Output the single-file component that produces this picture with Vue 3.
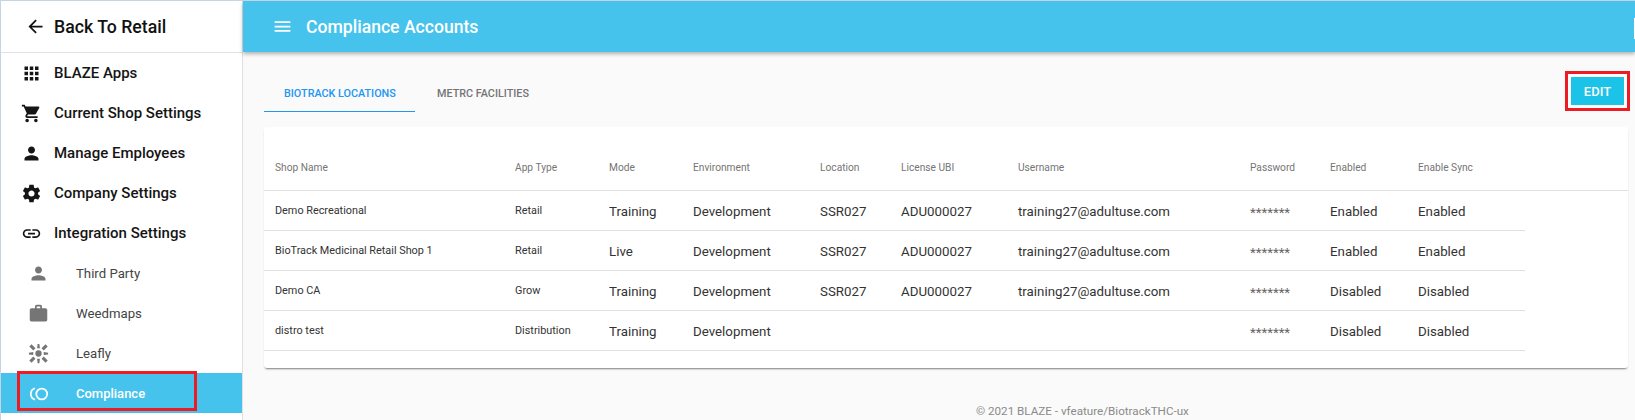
<script setup>
const d = {
  back: 'M20 11H7.83l5.59-5.59L12 4l-8 8 8 8 1.41-1.41L7.83 13H20v-2z',
  apps: 'M4 8h4V4H4v4zm6 12h4v-4h-4v4zm-6 0h4v-4H4v4zm0-6h4v-4H4v4zm6 0h4v-4h-4v4zm6-10v4h4V4h-4zm-6 4h4V4h-4v4zm6 6h4v-4h-4v4zm0 6h4v-4h-4v4z',
  cart: 'M7 18c-1.1 0-1.99.9-1.99 2S5.9 22 7 22s2-.9 2-2-.9-2-2-2zM1 2v2h2l3.6 7.59-1.35 2.45c-.16.28-.25.61-.25.96 0 1.1.9 2 2 2h12v-2H7.42c-.14 0-.25-.11-.25-.25l.03-.12.9-1.63h7.45c.75 0 1.41-.41 1.75-1.03l3.58-6.49c.08-.14.12-.31.12-.48 0-.55-.45-1-1-1H5.21l-.94-2H1zm16 16c-1.1 0-1.99.9-1.99 2s.89 2 1.99 2 2-.9 2-2-.9-2-2-2z',
  person: 'M12 12c2.21 0 4-1.79 4-4s-1.79-4-4-4-4 1.79-4 4 1.79 4 4 4zm0 2c-2.67 0-8 1.34-8 4v2h16v-2c0-2.66-5.33-4-8-4z',
  gear: 'M19.43 12.98c.04-.32.07-.64.07-.98s-.03-.66-.07-.98l2.11-1.65c.19-.15.24-.42.12-.64l-2-3.46c-.12-.22-.39-.3-.61-.22l-2.49 1c-.52-.4-1.08-.73-1.69-.98l-.38-2.65C14.46 2.18 14.25 2 14 2h-4c-.25 0-.46.18-.49.42l-.38 2.65c-.61.25-1.17.59-1.69.98l-2.49-1c-.23-.09-.49 0-.61.22l-2 3.46c-.13.22-.07.49.12.64l2.11 1.65c-.04.32-.07.65-.07.98s.03.66.07.98l-2.11 1.65c-.19.15-.24.42-.12.64l2 3.46c.12.22.39.3.61.22l2.49-1c.52.4 1.08.73 1.69.98l.38 2.65c.03.24.24.42.49.42h4c.25 0 .46-.18.49-.42l.38-2.65c.61-.25 1.17-.59 1.69-.98l2.49 1c.23.09.49 0 .61-.22l2-3.46c.12-.22.07-.49-.12-.64l-2.11-1.65zM12 15.5c-1.93 0-3.5-1.57-3.5-3.5s1.57-3.5 3.5-3.5 3.5 1.57 3.5 3.5-1.57 3.5-3.5 3.5z',
  link: 'M3.9 12c0-1.71 1.39-3.1 3.1-3.1h4V7H7c-2.76 0-5 2.24-5 5s2.24 5 5 5h4v-1.9H7c-1.71 0-3.1-1.39-3.1-3.1zM8 13h8v-2H8v2zm9-6h-4v1.9h4c1.71 0 3.1 1.39 3.1 3.1s-1.39 3.1-3.1 3.1h-4V17h4c2.76 0 5-2.24 5-5s-2.24-5-5-5z',
  work: 'M20 6h-4V4c0-1.11-.89-2-2-2h-4c-1.11 0-2 .89-2 2v2H4c-1.11 0-2 .89-2 2v11c0 1.11.89 2 2 2h16c1.11 0 2-.89 2-2V8c0-1.11-.89-2-2-2zm-6 0h-4V4h4v2z',
  menu: 'M3 18h18v-2H3v2zm0-5h18v-2H3v2zm0-7v2h18V6H3z',
};
const mainItems = [
  { label: 'BLAZE Apps', icon: d.apps },
  { label: 'Current Shop Settings', icon: d.cart },
  { label: 'Manage Employees', icon: d.person },
  { label: 'Company Settings', icon: d.gear },
  { label: 'Integration Settings', icon: d.link },
];
const columns = ['Shop Name','App Type','Mode','Environment','Location','License UBI','Username','Password','Enabled','Enable Sync'];
const email = 'training27@adultuse.com';
const rows = [
  ['Demo Recreational','Retail','Training','Development','SSR027','ADU000027',email,'*******','Enabled','Enabled'],
  ['BioTrack Medicinal Retail Shop 1','Retail','Live','Development','SSR027','ADU000027',email,'*******','Enabled','Enabled'],
  ['Demo CA','Grow','Training','Development','SSR027','ADU000027',email,'*******','Disabled','Disabled'],
  ['distro test','Distribution','Training','Development','','','','*******','Disabled','Disabled'],
];
const cellClass = (i) => (i < 2 ? 'small' : i === 7 ? 'stars' : 'large');
</script>

<template>
  <div class="page">
    <aside class="side">
      <div class="back">
        <svg class="ic" viewBox="0 0 24 24"><path :d="d.back" /></svg>
        <span>Back To Retail</span>
      </div>
      <nav class="nav">
        <div v-for="m in mainItems" :key="m.label" class="item">
          <svg class="ic" viewBox="0 0 24 24"><path :d="m.icon" /></svg>
          <span>{{ m.label }}</span>
        </div>
        <div class="item sub">
          <svg class="ic" viewBox="0 0 24 24"><path :d="d.person" /></svg>
          <span>Third Party</span>
        </div>
        <div class="item sub">
          <svg class="ic" viewBox="0 0 24 24"><path :d="d.work" /></svg>
          <span>Weedmaps</span>
        </div>
        <div class="item sub">
          <svg class="ic" viewBox="0 0 24 24">
            <circle cx="12" cy="12" r="3.600" />
            <path d="M11 1h2l.6 5h-3.200zM11 23h2l.6-5h-3.200zM1 11v2l5 .6v-3.200zM23 11v2l-5 .6v-3.200z" />
            <path d="M1.500 4L4 1.500l4.500 4.500-2.500 2.500zM22.500 4L20 1.500 15.500 6l2.500 2.500zM1.500 20L4 22.500 8.500 18 6 15.500zM22.500 20L20 22.500 15.500 18l2.500-2.500z" />
          </svg>
          <span>Leafly</span>
        </div>
        <div class="item sub active">
          <svg class="ic line" viewBox="0 0 24 24">
            <circle cx="15.700" cy="12.500" r="6.200" />
            <path d="M8 6A6.800 6.800 0 0 0 8 19" />
          </svg>
          <span>Compliance</span>
          <i class="mark mark-nav"></i>
        </div>
      </nav>
    </aside>
    <div class="main">
      <header class="bar">
        <svg class="ic" viewBox="0 0 24 24"><path :d="d.menu" /></svg>
        <h1>Compliance Accounts</h1>
        <i class="edge"></i>
      </header>
      <section class="content">
        <div class="top">
          <div class="tabs">
            <div class="tab on">BIOTRACK LOCATIONS</div>
            <div class="tab">METRC FACILITIES</div>
          </div>
          <button class="edit">EDIT<i class="mark mark-edit"></i></button>
        </div>
        <div class="card">
          <div class="grid head">
            <div v-for="c in columns" :key="c">{{ c }}</div>
          </div>
          <div v-for="r in rows" :key="r[0]" class="grid row">
            <div v-for="(v, i) in r" :key="i" :class="cellClass(i)">{{ v }}</div>
          </div>
        </div>
        <footer class="foot">© 2021 BLAZE - vfeature/BiotrackTHC-ux</footer>
      </section>
    </div>
  </div>
</template>

<style>
html, body { margin: 0; background: #fafafa; }
</style>

<style scoped>
.page {
  display: flex;
  width: 1635px;
  height: 420px;
  box-sizing: border-box;
  overflow: hidden;
  border-top: 1px solid #c6d4e8;
  border-left: 1px solid #c6d4e8;
  background: #fafafa;
  font-family: Roboto, "Liberation Sans", sans-serif;
  color: #212121;
}
.side {
  width: 242px;
  box-sizing: border-box;
  flex: none;
  background: #fff;
  border-right: 1px solid #e0e0e0;
}
.ic { width: 21px; height: 21px; flex: none; fill: currentColor; }
.line { fill: none; stroke: #fff; stroke-width: 2; }
.back {
  height: 52px;
  box-sizing: border-box;
  border-bottom: 1px solid #dfe2e8;
  display: flex;
  align-items: center;
  padding-left: 24px;
  gap: 8px;
  font-size: 17.700px;
  font-weight: 500;
  color: #111;
}
.nav { display: flex; flex-direction: column; }
.item {
  position: relative;
  height: 40px;
  display: flex;
  align-items: center;
  padding-left: 20px;
  gap: 12px;
  font-size: 15px;
  font-weight: 500;
  color: #151515;
}
.sub {
  padding-left: 27px;
  gap: 27px;
  font-size: 13.200px;
  font-weight: 400;
  color: #444;
}
.sub .ic { color: #757575; }
.active { background: #45c3ec; color: #fff; font-size: 13px; font-weight: 500; }
.active .ic { color: #fff; }
.mark { position: absolute; display: block; box-sizing: border-box; border: 3px solid #ed1c24; }
.mark-nav { left: 16px; top: -2px; width: 180px; height: 40px; }
.main { flex: 1; min-width: 0; display: flex; flex-direction: column; }
.bar {
  position: relative;
  height: 51px;
  flex: none;
  display: flex;
  align-items: center;
  padding-left: 29px;
  gap: 13px;
  background: #45c3ec;
  box-shadow: 0 2px 4px rgba(0, 0, 0, .3);
  color: #fff;
}
.bar h1 { margin: 0; font-size: 17.600px; font-weight: 500; }
.edge { position: absolute; right: 0; top: 17px; width: 1px; height: 21px; background: #fff; }
.content { flex: 1; padding: 0 7px 0 21px; }
.top { display: flex; justify-content: space-between; height: 75px; box-sizing: border-box; padding-top: 25px; }
.tabs { display: flex; height: 35px; }
.tab {
  height: 35px;
  flex: none;
  white-space: nowrap;
  box-sizing: border-box;
  padding: 0 20px 2px;
  display: flex;
  align-items: center;
  font-size: 10.800px;
  font-weight: 500;
  color: #757575;
}
.tab.on { color: #2196f3; width: 151px; border-bottom: 1px solid #2196f3; margin-right: 2px; }
.edit {
  position: relative;
  align-self: flex-start;
  width: 53px;
  height: 30px;
  margin-top: -1px;
  margin-right: 4px;
  border: 0;
  padding: 0;
  background: #1cc3e8;
  color: #fff;
  font: 500 13px Roboto, sans-serif;
}
.mark-edit { left: -6px; top: -5px; width: 65px; height: 40px; outline: 3px solid #fff; outline-offset: -6px; }
.card {
  background: #fff;
  border-radius: 3px;
  height: 241px;
  box-shadow: 0 2px 2px -1px rgba(0, 0, 0, .5);
}
.grid {
  display: grid;
  grid-template-columns: 240px 94px 84px 127px 81px 117px 232px 80px 88px 107px;
  padding-left: 11px;
  align-items: center;
}
.head {
  height: 64px;
  box-sizing: border-box;
  padding-top: 18px;
  border-bottom: 1px solid #e0e0e0;
  font-size: 10.200px;
  color: #757575;
}
.row {
  width: 1261px;
  box-sizing: border-box;
  height: 40px;
  border-bottom: 1px solid #e0e0e0;
}
.small { font-size: 10.850px; color: #333; }
.large { font-size: 13.300px; position: relative; top: 1px; color: #333; }
.stars { font-size: 13.300px; position: relative; top: 2px; color: #666; }
.foot {
  margin-top: 36px;
  padding-left: 712px;
  font-size: 11.650px;
  color: #8a8a8a;
}
</style>
